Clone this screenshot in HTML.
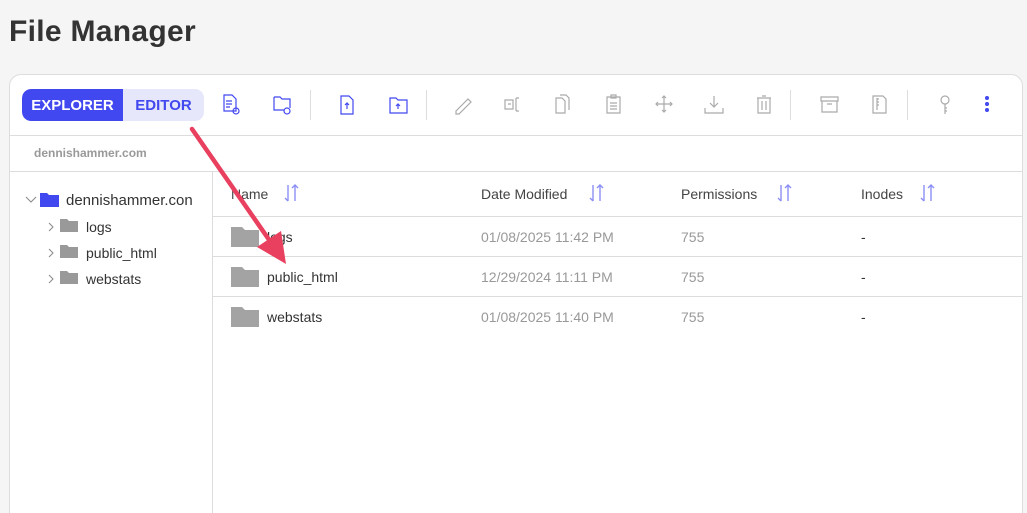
<!DOCTYPE html>
<html style="width:1027px;height:513px;overflow:hidden"><head><meta charset="utf-8"><style>
*{margin:0;padding:0;box-sizing:border-box}
body{width:1027px;height:513px;background:#f5f5f5;font-family:"Liberation Sans",sans-serif;position:relative;overflow:hidden;color:#333}
h1{position:absolute;left:9px;top:15px;font-size:30px;font-weight:bold;color:#333;letter-spacing:0.3px}
.card{position:absolute;left:9px;top:74px;width:1014px;height:439px;background:#fff;border:1px solid #ddd;border-bottom:none;border-radius:12px 12px 0 0}
.tabs{position:absolute;left:22px;top:89px;height:32px;width:182px;border-radius:9px;background:#e6e7fb;overflow:hidden;font-weight:bold;font-size:15px}
.tabs .a{position:absolute;left:0;top:1px;width:101px;height:32px;color:#fff;line-height:32px;text-align:center}
.tabs .bg{position:absolute;left:0;top:0;width:101px;height:32px;background:#4248ef;border-radius:9px 0 0 9px}
.tabs .b{position:absolute;left:101px;top:1px;width:81px;height:32px;color:#4248ef;line-height:32px;text-align:center}
.hl{position:absolute;height:1px;background:#ddd}
.vl{position:absolute;width:1px;background:#ddd}
.t{position:absolute;font-size:14px;white-space:nowrap}
.ic{position:absolute}
.h{color:#444}
</style></head><body>
<h1>File Manager</h1>
<div class="card"></div>
<div class="tabs"><div class="bg"></div><div class="a">EXPLORER</div><div class="b">EDITOR</div></div>
<div class="hl" style="left:10px;top:135px;width:1012px"></div>
<div class="hl" style="left:10px;top:171px;width:1012px"></div>
<div class="vl" style="left:212px;top:172px;height:341px"></div>
<div class="hl" style="left:213px;top:216px;width:809px"></div>
<div class="hl" style="left:213px;top:256px;width:809px"></div>
<div class="hl" style="left:213px;top:296px;width:809px"></div>
<div class="vl" style="left:310px;top:90px;height:30px"></div>
<div class="vl" style="left:426px;top:90px;height:30px"></div>
<div class="vl" style="left:790px;top:90px;height:30px"></div>
<div class="vl" style="left:907px;top:90px;height:30px"></div>
<svg class="ic" style="left:0;top:0" width="1027" height="140" fill="none" stroke-width="1.2">
<g stroke="#4248ef">
<path d="M224 95h8l4 4v12h-12z M226 101h6M226 104h6M226 107h4"/><circle cx="236" cy="111" r="3"/>
<path d="M274 97h6l2 2h8v9M274 97v13h10"/><circle cx="287" cy="111" r="3"/>
<path d="M341 96h8l4 4v14h-12z M347 109v-6m-2 2l2-2 2 2"/>
<path d="M390 98h6l2 2h9v13h-17z M398 109v-5m-2 2l2-2 2 2"/>
</g>
<g stroke="#aaa">
<path d="M456 111l12-12 3 3-12 12h-3z"/>
<path d="M505 100h8v9h-8z M508 104h3 M516 98v13 M516 98h3M516 111h3"/>
<path d="M556 98h6l3 3v12h-9z M560 95h6l3 3v12"/>
<path d="M607 97h13v16h-13z M611 95h5v3h-5z M610 103h7M610 106h7M610 109h7"/>
<path d="M664 96v16M656 104h16M662 98l2-2 2 2M662 110l2 2 2-2M658 102l-2 2 2 2M670 102l2 2-2 2"/>
<path d="M714 96v11m-4-4l4 4 4-4M705 108v5h18v-5"/>
<path d="M757 98h14M762 96h4 M758 98v15h12v-15M762 101v9M766 101v9"/>
<path d="M821 97h17v4h-17z M822 101v11h15v-11 M827 104h5"/>
<path d="M873 96h10l3 3v14h-13z M877 98v12M877 99h2M877 102h2M877 105h2"/>
<circle cx="945" cy="100" r="4"/><path d="M945 104v10m0-3h2m-2-3h2"/>
</g>
<g fill="#4248ef"><circle cx="987" cy="98" r="2"/><circle cx="987" cy="104" r="2"/><circle cx="987" cy="110" r="2"/></g>
</svg>
<div class="t" style="left:34px;top:146px;font-size:12px;color:#999;font-weight:bold">dennishammer.com</div>
<svg class="ic" style="left:0;top:180" width="213" height="120" fill="none" stroke="#888" stroke-width="1">
<path d="M26 17l5 5 5-5"/>
<path d="M49 43l4 4-4 4M49 69l4 4-4 4M49 95l4 4-4 4"/>
<path fill="#4248ef" stroke="none" d="M40 13h7l2 2h10v12h-19z"/>
<path fill="#999" stroke="none" d="M60 39h7l2 2h9v11h-18zM60 65h7l2 2h9v11h-18zM60 91h7l2 2h9v11h-18z"/>
</svg>
<div class="t" style="left:66px;top:192px;font-size:15px;width:130px;overflow:hidden">dennishammer.con</div>
<div class="t" style="left:86px;top:219px;font-size:14px">logs</div>
<div class="t" style="left:86px;top:245px;font-size:14px">public_html</div>
<div class="t" style="left:86px;top:271px;font-size:14px">webstats</div>
<div class="t h" style="left:231px;top:186px">Name</div>
<div class="t h" style="left:481px;top:186px">Date Modified</div>
<div class="t h" style="left:681px;top:186px">Permissions</div>
<div class="t h" style="left:861px;top:186px">Inodes</div>
<svg class="ic" style="left:0;top:180" width="1027" height="160" fill="none" stroke="#8b8ff5" stroke-width="1.4">
<path d="M288 5v16m-3-3l3 3M295 21v-16m-3 3l3-3 3 3"/>
<path d="M593 5v16m-3-3l3 3M600 21v-16m-3 3l3-3 3 3"/>
<path d="M781 5v16m-3-3l3 3M788 21v-16m-3 3l3-3 3 3"/>
<path d="M924 5v16m-3-3l3 3M931 21v-16m-3 3l3-3 3 3"/>
<path fill="#a3a3a3" stroke="none" d="M231 47h11l3 3h14v17h-28zM231 87h11l3 3h14v17h-28zM231 127h11l3 3h14v17h-28z"/>
</svg>
<div class="t" style="left:267px;top:229px">logs</div>
<div class="t" style="left:267px;top:269px">public_html</div>
<div class="t" style="left:267px;top:309px">webstats</div>
<div class="t" style="left:481px;top:229px;color:#999">01/08/2025 11:42 PM</div>
<div class="t" style="left:481px;top:269px;color:#999">12/29/2024 11:11 PM</div>
<div class="t" style="left:481px;top:309px;color:#999">01/08/2025 11:40 PM</div>
<div class="t" style="left:681px;top:229px;color:#999">755</div>
<div class="t" style="left:681px;top:269px;color:#999">755</div>
<div class="t" style="left:681px;top:309px;color:#999">755</div>
<div class="t" style="left:861px;top:229px">-</div>
<div class="t" style="left:861px;top:269px">-</div>
<div class="t" style="left:861px;top:309px">-</div>
<svg class="ic" style="left:0;top:0" width="1027" height="513">
<path d="M192 129L272 244" stroke="#e8405e" stroke-width="4.5" stroke-linecap="round"/>
<path d="M286 264L257 247L281 231z" fill="#e8405e"/>
</svg>
</body></html>
